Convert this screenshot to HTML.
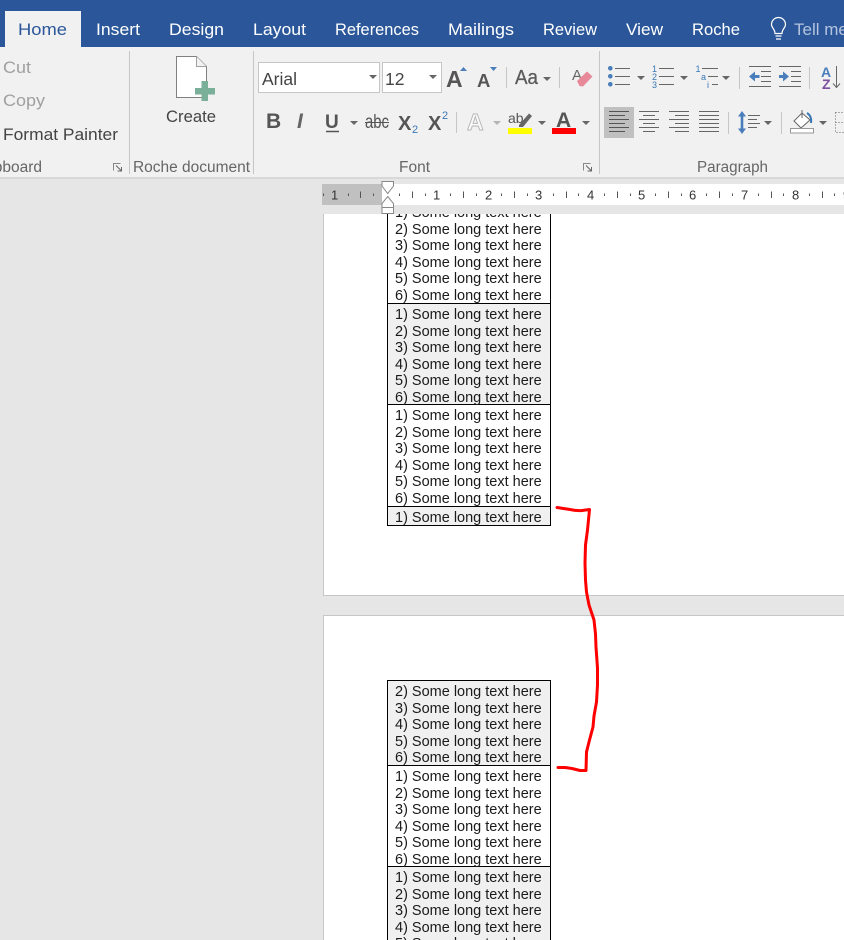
<!DOCTYPE html>
<html><head><meta charset="utf-8"><title>Word</title>
<style>
html,body{margin:0;padding:0;width:844px;height:940px;overflow:hidden;background:#e6e6e6}
svg{display:block;font-family:"Liberation Sans",sans-serif}
.t{font-size:14.5px;fill:#1a1a1a}
.tab{font-size:17px;fill:#fff}
.r{font-size:17px;fill:#444}
.g{font-size:15.5px;fill:#666}
.n{font-size:13px;fill:#333}
.sep{stroke:#c6c6c6;stroke-width:1}
.l{stroke:#666;stroke-width:1;fill:none}
.a{fill:#666}
.ic{font-weight:bold;fill:#555}
</style></head><body>
<svg width="844" height="940" viewBox="0 0 844 940" xmlns="http://www.w3.org/2000/svg">
<rect width="844" height="940" fill="#e6e6e6"/>
<!-- pages -->
<rect x="323.5" y="200.5" width="530" height="395" fill="#fff" stroke="#c6c6c6"/>
<rect x="323.5" y="615.5" width="530" height="340" fill="#fff" stroke="#c6c6c6"/>
<!-- table shading -->
<rect x="388" y="304" width="162" height="100" fill="#f0f0f0"/>
<rect x="388" y="507" width="162" height="18" fill="#f0f0f0"/>
<rect x="388" y="681" width="162" height="84" fill="#f0f0f0"/>
<rect x="388" y="867" width="162" height="73" fill="#f0f0f0"/>
<!-- table lines -->
<g stroke="#000" stroke-width="1" fill="none">
<path d="M387.5 205V525.5H550.5V205"/>
<path d="M387 303.5H551M387 404.5H551M387 506.5H551"/>
<path d="M387.5 940V680.5H550.5V940"/>
<path d="M387 765.5H551M387 866.5H551"/>
</g>
<!-- table text -->
<g class="t">
<text x="395" y="217">1) Some long text here</text>
<text x="395" y="234">2) Some long text here</text>
<text x="395" y="250">3) Some long text here</text>
<text x="395" y="267">4) Some long text here</text>
<text x="395" y="283">5) Some long text here</text>
<text x="395" y="300">6) Some long text here</text>
<text x="395" y="319">1) Some long text here</text>
<text x="395" y="336">2) Some long text here</text>
<text x="395" y="352">3) Some long text here</text>
<text x="395" y="369">4) Some long text here</text>
<text x="395" y="385">5) Some long text here</text>
<text x="395" y="402">6) Some long text here</text>
<text x="395" y="420">1) Some long text here</text>
<text x="395" y="437">2) Some long text here</text>
<text x="395" y="453">3) Some long text here</text>
<text x="395" y="470">4) Some long text here</text>
<text x="395" y="486">5) Some long text here</text>
<text x="395" y="503">6) Some long text here</text>
<text x="395" y="522">1) Some long text here</text>
<text x="395" y="696">2) Some long text here</text>
<text x="395" y="713">3) Some long text here</text>
<text x="395" y="729">4) Some long text here</text>
<text x="395" y="746">5) Some long text here</text>
<text x="395" y="762">6) Some long text here</text>
<text x="395" y="781">1) Some long text here</text>
<text x="395" y="798">2) Some long text here</text>
<text x="395" y="814">3) Some long text here</text>
<text x="395" y="831">4) Some long text here</text>
<text x="395" y="847">5) Some long text here</text>
<text x="395" y="864">6) Some long text here</text>
<text x="395" y="882">1) Some long text here</text>
<text x="395" y="899">2) Some long text here</text>
<text x="395" y="915">3) Some long text here</text>
<text x="395" y="932">4) Some long text here</text>
<text x="395" y="948">5) Some long text here</text>
</g>
<!-- red annotation -->
<path d="M557 507.5L570 509.5Q577 511 582 510.5L589.5 509.5L587.5 530L585.5 545L585 563L585.5 580L586.5 592L589 605L594 620L595.5 634L596 647L597.5 668L597.5 685L596.5 702L594 716L593 727L589.5 740L586.5 752L586 770.5L580 770.5L572 768.5L565 767.5L558 767.5" fill="none" stroke="#f00" stroke-width="3" stroke-linejoin="round" stroke-linecap="round"/>
<!-- cover over top of page -->
<rect x="0" y="178" width="844" height="36" fill="#e6e6e6"/>
<rect x="0" y="0" width="323" height="214" fill="#e6e6e6"/>
<!-- title tabs -->
<rect width="844" height="47" fill="#2b579a"/>
<rect x="5" y="11" width="76" height="36" fill="#f1f1f1"/>
<text x="18" y="35" class="tab" style="fill:#2b579a" textLength="49" lengthAdjust="spacingAndGlyphs">Home</text>
<text x="96" y="35" class="tab" textLength="44" lengthAdjust="spacingAndGlyphs">Insert</text>
<text x="169" y="35" class="tab" textLength="55" lengthAdjust="spacingAndGlyphs">Design</text>
<text x="253" y="35" class="tab" textLength="53" lengthAdjust="spacingAndGlyphs">Layout</text>
<text x="335" y="35" class="tab" textLength="84" lengthAdjust="spacingAndGlyphs">References</text>
<text x="448" y="35" class="tab" textLength="66" lengthAdjust="spacingAndGlyphs">Mailings</text>
<text x="543" y="35" class="tab" textLength="54" lengthAdjust="spacingAndGlyphs">Review</text>
<text x="626" y="35" class="tab" textLength="37" lengthAdjust="spacingAndGlyphs">View</text>
<text x="692" y="35" class="tab" textLength="48" lengthAdjust="spacingAndGlyphs">Roche</text>
<text x="794" y="35" class="tab" style="fill:#b4c4de">Tell me</text>
<path d="M775 33.5C775 29 771.5 28 771.5 24.5A7 7 0 0 1 785.5 24.5C785.5 28 782 29 782 33.5ZM775.5 36H781.5M776 39H781" fill="none" stroke="#fff" stroke-width="1.2"/>
<!-- ribbon -->
<rect y="47" width="844" height="131" fill="#f1f1f1"/>
<rect y="177" width="844" height="2" fill="#d8d8d8"/>
<path class="sep" d="M129.5 51V174M253.5 51V174M599.5 51V174"/>
<!-- clipboard -->
<text x="3" y="73" class="r" style="fill:#a0a0a0" textLength="28" lengthAdjust="spacingAndGlyphs">Cut</text>
<text x="3" y="106" class="r" style="fill:#a0a0a0" textLength="42" lengthAdjust="spacingAndGlyphs">Copy</text>
<text x="3" y="140" class="r" textLength="115" lengthAdjust="spacingAndGlyphs">Format Painter</text>
<text x="42" y="172" class="g" text-anchor="end">Clipboard</text>
<path d="M113.5 170.5V163.5H120.5" fill="none" stroke="#888"/><path d="M116 165.5L121 170.5M121.5 167V171H117.5" fill="none" stroke="#666"/>
<!-- create -->
<path d="M176.5 56.5H196.5L206.5 66.5V97.5H176.5Z" fill="#fff" stroke="#808080"/>
<path d="M196.5 56.5V66.5H206.5" fill="#f1f1f1" stroke="#a0a0a0"/>
<path d="M201.5 81H208V88H215V94.5H208V101H201.5V94.5H195V88H201.5Z" fill="#7aaf9a"/>
<text x="166" y="122" class="r" textLength="50" lengthAdjust="spacingAndGlyphs">Create</text>
<text x="133" y="172" class="g" textLength="117" lengthAdjust="spacingAndGlyphs">Roche document</text>
<!-- font boxes -->
<rect x="258.5" y="62.5" width="121" height="30" fill="#fff" stroke="#c6c6c6"/>
<rect x="382.5" y="62.5" width="59" height="30" fill="#fff" stroke="#c6c6c6"/>
<text x="262" y="85" style="font-size:17.5px;fill:#444">Arial</text>
<text x="385" y="85" style="font-size:17.5px;fill:#444">12</text>
<path class="a" d="M369 75H377L373 79ZM429 75H437L433 79Z"/>
<text x="446" y="87" class="ic" style="font-size:23px">A</text>
<path d="M460 71L463.5 67L467 71Z" fill="#4a7ebb"/>
<text x="477" y="87" class="ic" style="font-size:18.5px">A</text>
<path d="M490 67H497L493.5 71Z" fill="#4a7ebb"/>
<path class="sep" d="M506.5 67V88"/>
<text x="515" y="84" style="font-size:20px;fill:#5a5a5a;stroke:#5a5a5a;stroke-width:.3" textLength="23" lengthAdjust="spacingAndGlyphs">Aa</text>
<path class="a" d="M543 77H551L547 81Z"/>
<path class="sep" d="M559.5 67V88"/>
<text x="572" y="80" style="font-size:15px;fill:#666">A</text>
<path d="M577 81L587 71.5L592.5 76.5L583 86.5L579.5 86Z" fill="#e8899a"/>
<!-- row 2 -->
<text x="266" y="128" class="ic" style="font-size:21px">B</text>
<text x="297" y="128" style="font-size:21px;font-style:italic;font-weight:bold;fill:#666">I</text>
<text x="325" y="128" class="ic" style="font-size:19px">U</text>
<path d="M326 131.5H339" stroke="#555" stroke-width="1.5"/>
<path class="a" d="M350 121H358L354 125Z"/>
<text x="365" y="128" style="font-size:19px;fill:#555" textLength="24" lengthAdjust="spacingAndGlyphs">abc</text>
<path d="M365 122.5H389" stroke="#555"/>
<text x="398" y="130" class="ic" style="font-size:20px">X</text>
<text x="412" y="133" style="font-size:11px;fill:#3a78b5">2</text>
<text x="428" y="130" class="ic" style="font-size:20px">X</text>
<text x="442" y="119" style="font-size:11px;fill:#3a78b5">2</text>
<path class="sep" d="M456.5 112V133"/>
<text x="467" y="130" style="font-size:23px;font-weight:bold;fill:#fafafa;stroke:#b4b4b4;stroke-width:.9">A</text>
<path d="M493 121H501L497 125Z" fill="#b4b4b4"/>
<text x="508" y="123" style="font-size:14px;fill:#555">ab</text>
<path d="M519 125L529 113.5L532 116L523 127L519 127Z" fill="#666"/>
<rect x="508" y="128" width="24" height="6" fill="#ff0"/>
<path class="a" d="M538 121H546L542 125Z"/>
<text x="556" y="127" class="ic" style="font-size:21px">A</text>
<rect x="552" y="128" width="24" height="6" fill="#f00"/>
<path class="a" d="M582 121H590L586 125Z"/>
<text x="399" y="172" class="g" textLength="31" lengthAdjust="spacingAndGlyphs">Font</text>
<path d="M583.5 170.5V163.5H590.5" fill="none" stroke="#888"/><path d="M586 165.5L591 170.5M591.5 167V171H587.5" fill="none" stroke="#666"/>
<!-- paragraph top row -->
<g fill="#4a7ebb"><circle cx="610.3" cy="68.3" r="2.3"/><circle cx="610.3" cy="76.3" r="2.3"/><circle cx="610.3" cy="84.3" r="2.3"/></g>
<path class="l" d="M615 68.5H630M615 76.5H630M615 84.5H630"/>
<path class="a" d="M637 76H645L641 80Z"/>
<g style="font-size:9px;fill:#3a78b5"><text x="652" y="72">1</text><text x="652" y="80">2</text><text x="652" y="88">3</text></g>
<path class="l" d="M659 68.5H674M659 76.5H674M659 84.5H674"/>
<path class="a" d="M680 76H688L684 80Z"/>
<g style="font-size:9px;fill:#3a78b5"><text x="695.5" y="72">1</text><text x="701" y="80">a</text><text x="707" y="88">i</text></g>
<path class="l" d="M702 68.5H718M708 76.5H718M712 84.5H718"/>
<path class="a" d="M722 76H730L726 80Z"/>
<path class="sep" d="M739.5 67V89"/>
<path class="l" d="M749 66.5H771M761 71.5H771M761 76.5H771M761 81.5H771M749 86.5H771"/>
<path d="M749 76.5L755 71.5V75H759.5V78H755V81.5Z" fill="#4a7ebb"/>
<path class="l" d="M779 66.5H801M791 71.5H801M791 76.5H801M791 81.5H801M779 86.5H801"/>
<path d="M789 76.5L783 71.5V75H779V78H783V81.5Z" fill="#4a7ebb"/>
<path class="sep" d="M809.5 67V89"/>
<text x="821" y="77" style="font-size:14px;font-weight:bold;fill:#4a7ebb">A</text>
<text x="822" y="89" style="font-size:14px;font-weight:bold;fill:#7d4f9e">Z</text>
<path class="l" d="M836.5 66V87M833 83.5L836.5 87.5L840 83.5"/>
<!-- paragraph second row -->
<rect x="604" y="107" width="30" height="31" fill="#c0c0c0"/>
<path class="l" style="stroke:#555" d="M609 111.5H629M609 115.5H625M609 119.5H629M609 123.5H625M609 127.5H629M609 131.5H625"/>
<path class="l" d="M639 111.5H659M643 115.5H655M639 119.5H659M643 123.5H655M639 127.5H659M643 131.5H655"/>
<path class="l" d="M669 111.5H689M675 115.5H689M669 119.5H689M675 123.5H689M669 127.5H689M675 131.5H689"/>
<path class="l" d="M699 111.5H719M699 115.5H719M699 119.5H719M699 123.5H719M699 127.5H719M699 131.5H719"/>
<path class="sep" d="M728.5 112V134"/>
<path d="M742 111L746 116.5H743.3V128.5H746L742 134L738 128.5H740.7V116.5H738Z" fill="#4a7ebb"/>
<path class="l" d="M748 115.5H760M748 119.5H757M748 123.5H760M748 127.5H757"/>
<path class="a" d="M764 121H772L768 125Z"/>
<path class="sep" d="M781.5 112V134"/>
<path d="M802 113L810 120L801 128L794 121Z" fill="#fff" stroke="#666"/>
<path d="M802 110V118" stroke="#666"/><path d="M807 113Q812 116 811 123" fill="none" stroke="#3a78b5" stroke-width="2"/>
<rect x="790.5" y="128.5" width="23" height="4.5" fill="#fff" stroke="#999"/>
<path class="a" d="M819 121H827L823 125Z"/>
<path d="M835.5 112.5H844M835.5 112.5V132.5H844M835.5 122.5H844" fill="none" stroke="#666" stroke-dasharray="1 2"/>
<text x="697" y="172" class="g" textLength="71" lengthAdjust="spacingAndGlyphs">Paragraph</text>
<!-- ruler -->
<rect x="322" y="184" width="60" height="21" fill="#c0c0c0"/>
<rect x="382" y="184" width="462" height="21" fill="#fff"/>
<g stroke="#555" stroke-width="1">
<path d="M323.5 193.5V196M348.5 193.5V196M373.5 193.5V196M399.5 193.5V196M425.5 193.5V196M450.5 193.5V196M476.5 193.5V196M501.5 193.5V196M527.5 193.5V196M553.5 193.5V196M578.5 193.5V196M604.5 193.5V196M630.5 193.5V196M655.5 193.5V196M681.5 193.5V196M706.5 193.5V196M732.5 193.5V196M758.5 193.5V196M783.5 193.5V196M809.5 193.5V196M834.5 193.5V196"/>
<path d="M360.5 191.5V198M412.5 191.5V198M463.5 191.5V198M514.5 191.5V198M566.5 191.5V198M617.5 191.5V198M668.5 191.5V198M719.5 191.5V198M771.5 191.5V198M822.5 191.5V198"/>
</g>
<g class="n">
<text x="331" y="199.5">1</text><text x="433" y="199.5">1</text><text x="485" y="199.5">2</text><text x="535" y="199.5">3</text><text x="587" y="199.5">4</text><text x="638" y="199.5">5</text><text x="689" y="199.5">6</text><text x="741" y="199.5">7</text><text x="792" y="199.5">8</text><text x="843" y="199.5">9</text>
</g>
<path d="M382 181.5H393.5V186L387.7 193.5L382 186Z" fill="#fff" stroke="#888"/>
<path d="M387.7 196.5L393.5 203.5V213.5H382V203.5Z" fill="#fff" stroke="#888"/>
<path d="M382 207.5H393.5" stroke="#888"/>
</svg>
</body></html>
